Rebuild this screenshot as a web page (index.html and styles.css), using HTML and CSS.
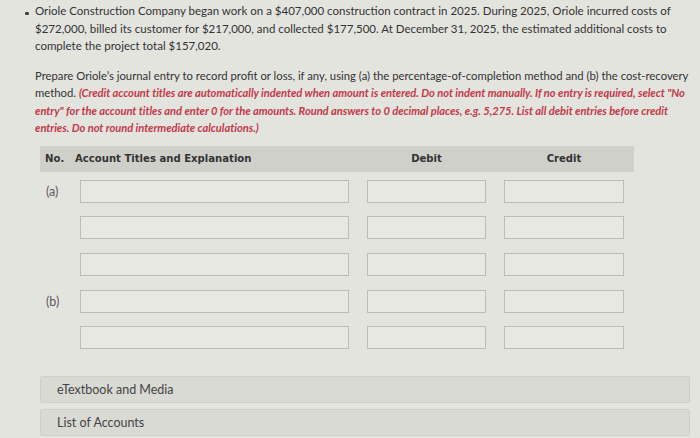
FILE: index.html
```html
<!DOCTYPE html>
<html>
<head>
<meta charset="utf-8">
<link rel="stylesheet" href="styles.css">
</head>
<body>
<div class="page">
  <div class="question">
    <span class="bullet"></span>
    <p class="para">Oriole Construction Company began work on a $407,000 construction contract in 2025. During 2025, Oriole incurred costs of<br>$272,000, billed its customer for $217,000, and collected $177,500. At December 31, 2025, the estimated additional costs to<br>complete the project total $157,020.</p>
    <p class="para second">Prepare Oriole’s journal entry to record profit or loss, if any, using (a) the percentage-of-completion method and (b) the cost-recovery<br>method. <span class="note">(Credit account titles are automatically indented when amount is entered. Do not indent manually. If no entry is required, select "No<br>entry" for the account titles and enter 0 for the amounts. Round answers to 0 decimal places, e.g. 5,275. List all debit entries before credit<br>entries. Do not round intermediate calculations.)</span></p>
  </div>

  <div class="journal">
    <div class="head">
      <div class="h-no">No.</div>
      <div class="h-acct">Account Titles and Explanation</div>
      <div class="h-amt">Debit</div>
      <div class="h-amt credit">Credit</div>
    </div>
    <div class="rows">
      <div class="lbl">(a)</div><div class="box"></div><div class="box"></div><div class="box"></div>
      <div class="lbl"></div><div class="box"></div><div class="box"></div><div class="box"></div>
      <div class="lbl"></div><div class="box"></div><div class="box"></div><div class="box"></div>
      <div class="lbl">(b)</div><div class="box"></div><div class="box"></div><div class="box"></div>
      <div class="lbl"></div><div class="box"></div><div class="box"></div><div class="box"></div>
    </div>
  </div>

  <div class="bars">
    <div class="bar">eTextbook and Media</div>
    <div class="bar">List of Accounts</div>
  </div>
</div>
</body>
</html>
```

FILE: styles.css
```css
html, body {
  margin: 0;
  padding: 0;
}
body {
  background: #e4e4df;
  width: 700px;
  height: 438px;
  overflow: hidden;
  font-family: Lato, "Liberation Sans", sans-serif;
  color: #333;
}
.page {
  padding: 2px 0 0 0;
}
.question {
  position: relative;
  padding-left: 35px;
}
.bullet {
  position: absolute;
  left: 25px;
  top: 10px;
  width: 4px;
  height: 3px;
  background: #444;
  border-radius: 1px;
}
.para {
  margin: 0;
  font-size: 11.5px;
  line-height: 17.5px;
  color: #333;
  white-space: nowrap;
}
.para.second {
  margin-top: 12px;
  font-size: 11.3px;
}
.note {
  color: #c23a48;
  font-style: italic;
  font-weight: 700;
  font-size: 11.15px;
  letter-spacing: -0.05px;
}
.journal {
  margin: 9px 0 0 40px;
  width: 594px;
}
.head {
  display: grid;
  grid-template-columns: 35px 292px 119px 18px 120px 10px;
  height: 26px;
  align-items: center;
  background: #d0d0cb;
  font-family: "DejaVu Sans", Verdana, sans-serif;
  font-weight: 700;
  font-size: 10.1px;
  color: #333;
}
.h-no {
  padding-left: 5px;
}
.h-amt {
  text-align: center;
}
.h-amt.credit {
  grid-column: 5;
}
.rows {
  display: grid;
  grid-template-columns: 22px 269px 119px 120px;
  column-gap: 18px;
  row-gap: 13.7px;
  margin-top: 8px;
}
.lbl {
  font-family: Lato, "Liberation Sans", sans-serif;
  font-size: 12.5px;
  color: #5a5a5a;
  padding-left: 6px;
  display: flex;
  align-items: center;
}
.box {
  height: 21px;
  border: 1px solid #bdbdb7;
  background: #e8e8e3;
}
.bars {
  margin: 27px 10px 0 40px;
  display: flex;
  flex-direction: column;
  gap: 6px;
}
.bar {
  height: 27px;
  box-sizing: border-box;
  padding-left: 16px;
  display: flex;
  align-items: center;
  background: #dadad5;
  border: 1px solid #d0d0ca;
  border-radius: 2px;
  font-size: 12.5px;
  color: #444;
}
```
